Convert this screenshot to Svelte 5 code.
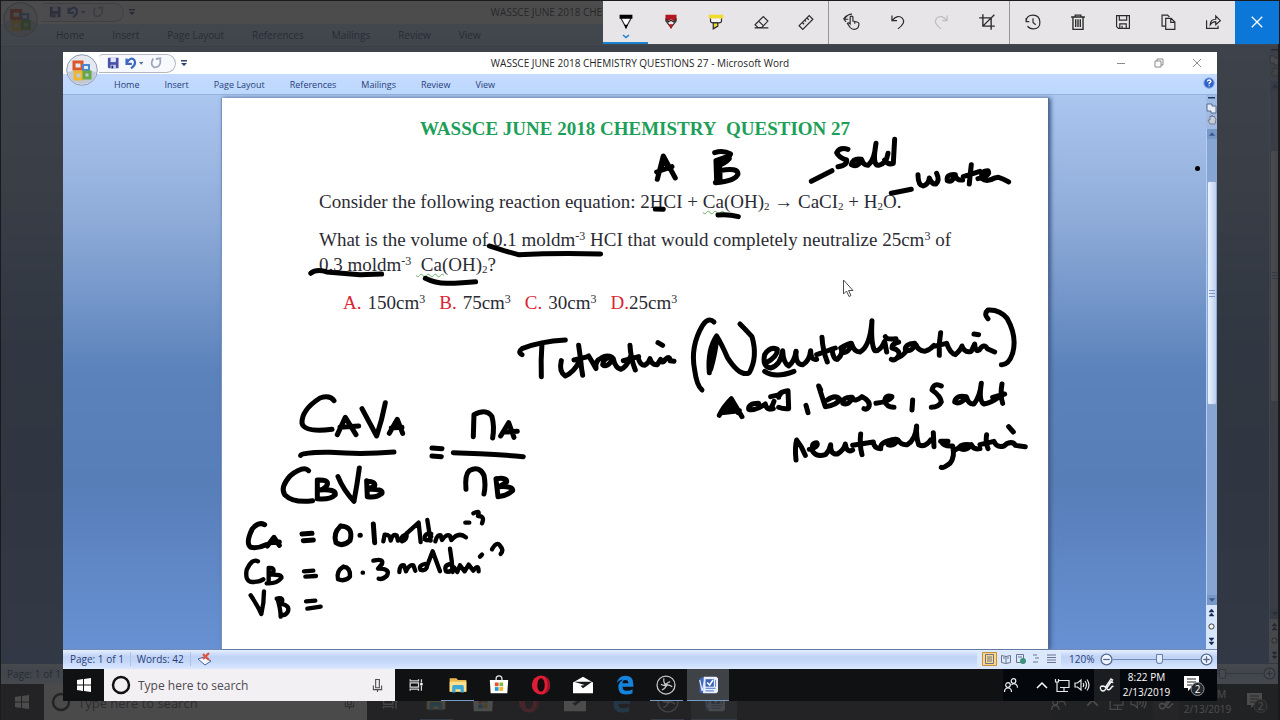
<script>
  const tabs = ['Home', 'Insert', 'Page Layout', 'References', 'Mailings', 'Review', 'View'];
  const apps = [
    { id: 'taskview', label: 'Task View' },
    { id: 'explorer', label: 'File Explorer', open: true },
    { id: 'store', label: 'Store' },
    { id: 'opera', label: 'Opera' },
    { id: 'mail', label: 'Mail' },
    { id: 'edge', label: 'Edge' },
    { id: 'obs', label: 'OBS Studio', open: true },
    { id: 'word', label: 'Word', open: true, active: true }
  ];
  const toolGroups = [
    ['pen', 'pencil', 'highlighter', 'eraser', 'ruler'],
    ['touch', 'undo', 'redo', 'crop'],
    ['history', 'trash', 'save', 'copy', 'share']
  ];

  // Pen strokes, grouped by where they were written; three units to a pixel.
  const ink = [
    { x: 300, y: 110, d: [
      'M1072 208L1090 138L1126 204M1070 186L1116 170M1080 182L1092 150L1108 176',
      'M1066 297L1090 298',
      'M568 408L612 422L655 434Q780 428 902 432',
      'M32 490Q50 476 80 486L180 494L245 492',
      'M376 505Q405 520 440 520Q490 519 527 515'
    ] },
    { x: 640, y: 110, d: [
      'M224 128Q250 120 272 132Q268 148 232 158M228 154L230 212M232 168Q256 160 268 146M240 182Q294 172 294 192Q285 214 226 218M240 176L240 212M228 152L262 140',
      'M234 315Q265 312 295 320',
      'M514 214L576 182',
      'M624 118Q600 110 590 128Q596 142 620 150Q622 166 594 170',
      'M664 148Q640 144 634 164Q650 174 666 150Q670 166 684 166Q704 150 708 100Q696 168 716 166Q740 160 744 130M764 88L760 160Q745 166 734 150',
      'M754 250L814 238',
      'M834 194Q834 226 850 228Q866 222 868 204Q876 224 888 222Q900 210 890 190',
      'M946 194Q918 192 922 212Q936 220 946 196Q950 212 968 210M994 164Q990 200 988 222M970 200L1020 184',
      'M1014 206Q1054 196 1044 182Q1020 182 1026 206Q1040 218 1064 204L1076 202Q1090 206 1106 216'
    ] },
    { x: 500, y: 300, d: [
      'M66 164Q52 156 66 146Q120 124 196 120M126 130Q122 180 124 230',
      'M184 182Q176 216 196 228Q222 216 238 184M236 136L242 180Q244 205 248 226M222 180L264 170',
      'M266 168Q276 184 288 206Q284 182 304 174Q320 164 336 172Q310 172 308 194Q320 206 340 176Q346 204 362 208Q382 200 390 172M390 136Q392 175 406 210M370 182L416 170',
      'M414 172Q420 196 434 196Q446 190 450 176Q456 196 472 194L482 178Q486 194 496 178Q510 166 510 182L522 184M474 128L488 136',
      'M642 66Q626 50 608 76Q570 140 584 210Q590 256 606 270',
      'M628 218Q622 150 650 108Q664 130 682 172Q720 232 748 218Q774 170 756 110Q738 90 720 72M632 208Q646 160 650 116',
      'M658 346Q670 320 694 296L726 350M680 318L718 332L664 338M684 328L700 310L714 338',
      'M776 310Q744 310 746 328Q764 334 796 312Q800 332 820 326M812 290L840 284'
    ] },
    { x: 770, y: 300, d: [
      'M-14 190Q24 170 22 148Q0 138 -16 164Q-24 200 2 204Q32 196 38 152Q40 190 56 198Q72 186 78 156',
      'M-16 214Q16 236 72 214',
      'M78 154Q76 194 98 194Q118 184 122 152Q122 182 140 178M156 112Q158 150 172 186M140 164L196 144',
      'M186 148Q190 180 202 178Q222 160 212 144Q240 128 244 130Q214 136 218 156Q232 162 246 134Q252 156 270 156Q300 140 306 62Q302 130 314 152Q330 156 344 124L350 156',
      'M346 110Q352 120 378 116M386 126Q364 132 366 144Q392 150 386 168Q374 184 364 178',
      'M386 172Q406 162 410 148M434 130Q404 132 406 150Q420 158 438 134Q444 152 464 154Q480 150 492 136M512 98Q506 130 508 166M488 140L530 130Q540 160 556 164Q572 150 576 138Q584 160 604 154L614 132Q616 158 628 150Q642 128 652 146L674 156M612 102L626 104',
      'M654 56Q640 42 654 30Q690 28 712 56Q742 110 728 160Q716 196 694 194',
      'M0 326Q6 322 12 304M54 272Q24 276 26 292M26 322Q40 328 56 326L54 272M108 316L114 338',
      'M146 258Q156 290 166 320Q200 316 210 298Q196 282 172 300M146 258L152 270',
      'M246 292Q218 290 218 310Q234 318 248 294Q254 308 276 290Q304 304 296 322Q290 330 282 326',
      'M318 310Q362 304 366 290Q346 282 344 304Q350 322 372 322M428 300L426 330',
      'M514 258Q492 246 486 270Q512 288 514 306Q506 322 484 322',
      'M588 290Q558 284 554 306Q568 316 590 292Q596 314 612 312Q630 290 634 250Q626 304 642 312Q664 308 688 290M696 252Q690 285 698 310M668 292L704 282',
      'M78 480Q74 440 80 420Q96 440 106 466M118 448Q148 440 140 428Q122 428 128 454Q140 472 166 464Q180 450 182 434Q180 464 202 462Q222 450 226 432Q230 460 248 450',
      'M272 402Q268 435 276 464M248 436L310 426Q312 446 332 446Q328 424 378 418Q350 418 354 434Q370 440 384 420Q394 436 412 434Q436 420 440 378Q438 410 446 434Q466 444 482 420M490 398L492 440',
      'M514 424Q520 440 548 438Q556 470 540 490Q520 506 514 502M512 424L534 424',
      'M550 452Q566 446 572 438M600 434Q570 430 572 446Q590 454 604 434Q610 450 630 446M650 404Q646 430 654 446M630 434L672 424Q680 444 702 438L712 430Q730 424 736 436L766 440M716 380L730 396'
    ] },
    { x: 230, y: 380, d: [
      'M312 62Q300 44 270 54Q214 90 216 130Q222 158 306 148',
      'M322 164L346 112L378 164M330 142L386 138',
      'M396 86L440 168Q456 120 466 68',
      'M478 160L502 118L518 160M484 144L516 142',
      'M212 226Q216 216 300 217Q400 224 492 216',
      'M236 272Q220 256 180 288Q150 322 164 344Q190 370 248 362',
      'M262 300L262 354M262 300Q296 298 292 314Q284 328 268 330Q318 326 316 344Q300 360 262 356',
      'M324 290Q340 330 372 364Q382 310 388 264',
      'M410 302L412 350M412 304Q438 304 434 318L414 328Q460 326 456 340Q440 354 412 350',
      'M606 204L636 206M606 228L634 230',
      'M670 218Q760 220 880 230',
      'M730 170L732 104Q770 84 786 110Q794 140 788 174',
      'M812 168L836 128L852 172M820 156L862 154',
      'M708 328Q704 285 718 272Q748 256 762 286Q768 316 762 342',
      'M798 296L804 350M800 296Q832 292 830 306L808 320Q850 318 848 332Q830 348 804 350',
      'M104 434Q84 424 66 448Q46 490 62 502Q84 506 108 494M112 498L132 472L148 496M120 488L148 486',
      'M216 462L246 460M220 482L250 480',
      'M332 438Q308 460 318 488Q338 502 360 482Q372 440 332 438',
      'M390 466L391 466M430 432L434 488'
    ] },
    { x: 230, y: 380, thin: true, d: [
      'M460 484L464 464Q480 462 482 482Q488 460 500 466L504 482M526 464Q508 472 516 484Q532 480 530 460L566 428L572 486',
      'M592 420L602 482M604 462Q582 458 584 478Q596 486 604 470M616 484Q622 462 632 466L636 480Q650 460 660 468L664 480Q686 454 708 472',
      'M706 428L718 428M730 400Q752 388 744 408Q766 408 756 430',
      'M84 544Q66 534 50 570Q44 604 66 606Q90 606 100 598M116 564L116 608M116 564Q134 562 130 576L118 584Q158 582 154 594Q140 612 110 610',
      'M222 574L250 572M226 590L258 588',
      'M340 560Q318 574 324 598Q346 606 360 590Q362 562 340 560M398 578L399 578',
      'M430 542Q462 534 456 552L444 566Q484 566 470 588Q456 600 446 596',
      'M508 576Q510 552 522 556L528 574Q538 552 550 556L556 572M586 552Q564 556 572 570Q590 574 592 556L608 514L630 574',
      'M660 506Q666 540 668 576M664 552Q640 554 648 574Q660 580 672 562L682 576L690 556L704 574L716 554L730 572Q746 550 746 574M750 530L756 524M786 508Q802 480 812 500Q822 510 812 522',
      'M62 646Q80 672 94 702Q102 670 102 634',
      'M144 662Q152 690 152 710M140 656Q164 650 154 672Q180 676 174 694Q166 708 156 704',
      'M228 664L256 662M232 686L272 680'
    ] }
  ];
</script>

{#snippet appIcon(id)}
  <svg class="app-icon" viewBox="0 0 24 24" aria-hidden="true">
    {#if id === 'taskview'}
      <g fill="none" stroke="#d8d8d8" stroke-width="1.5"><path d="M5 5v2h10V5M5 19v-2h10v2M5 9.500h10v5H5zM18.500 5v4M18.500 13v6" /></g><path d="M17 9.500h3v3h-3z" fill="#fff" />
    {:else if id === 'explorer'}
      <path d="M2 4h8l2 2h10v14H2z" fill="#e9b94e" /><path d="M2 8h20v12H2z" fill="#fbe08e" /><path d="M5 21v-7q0-2 2-2h10q2 0 2 2v7h-4v-4H9v4z" fill="#3fa9d5" />
    {:else if id === 'store'}
      <path d="M8.500 6V4.500Q8.500 1 12 1t3.500 3.500V6" fill="none" stroke="#e8e8e8" stroke-width="1.500" /><path d="M1 6h22l-1 16H2z" fill="#fff" /><path d="M7 9h4.500v4.500H7z" fill="#e8502a" /><path d="M12.500 9H17v4.500h-4.500z" fill="#7fba42" /><path d="M7 14.500h4.500V19H7z" fill="#2299dc" /><path d="M12.500 14.500H17V19h-4.500z" fill="#f4b51e" />
    {:else if id === 'opera'}
      <ellipse cx="12" cy="12" rx="11" ry="11.500" fill="#df1e36" /><path d="M15 1q8 2 8 11t-8 11q5-4 5-11T15 1" fill="#98142a" /><ellipse cx="12" cy="12" rx="4.500" ry="8" fill="#130b0d" />
    {:else if id === 'mail'}
      <path d="M0 9l12-7 12 7v13H0z" fill="#fff" /><path d="M1 8h22l-11 8-3-3 5-1z" fill="#16181b" />
    {:else if id === 'edge'}
      <path d="M2 10Q4 1 12.500 1 22 1 22 11v3H9q0 5 6 5 3 0 6-2v5q-3 1.500-8 1.500-9 0-9-9 0-6 6-9-6 1-8 4.500zM9 10h7q0-4-3.500-4T9 10" fill="#1584dd" fill-rule="evenodd" />
    {:else if id === 'obs'}
      <g fill="none" stroke="#c9c9c9" stroke-width="1.500"><circle cx="12" cy="12" r="10.800" /><path d="M9.500 4q-1 5 2.500 8 3.500-1 7.500 2M12 12q0 4-5 6M12 12q1-3 5-4M12 12q-3 1-6-1" /></g><circle cx="12" cy="12" r="2" fill="#c9c9c9" />
    {:else}
      <path d="M2 4l5-2v20l-5-1z" fill="#3f69bd" /><path d="M7 2h15l2 2v16l-2 2H6z" fill="#e9effc" /><path d="M9 5h10v9H9z" fill="#3a63b6" /><path d="M11 9l3 3 4-6" stroke="#fff" stroke-width="1.800" fill="none" /><path d="M9 16h12M9 19h10M21 6v8" stroke="#6b8fd2" stroke-width="1.300" /><path d="M2 6l3 13 3-12" stroke="#dfe9ff" stroke-width="1.500" fill="none" />
    {/if}
  </svg>
{/snippet}

{#snippet toolIcon(id)}
  <svg class="tool-icon" viewBox="0 0 24 24" aria-hidden="true" fill="none" stroke="#2b2b2b" stroke-width="1.300">
    {#if id === 'pen'}
      <path d="M6.500 8l5.500 10 5.500-10" fill="#fff" /><path d="M5 4h14v4.500H5zM10 15h4l-2 5z" fill="#000" stroke="none" />
    {:else if id === 'pencil'}
      <path d="M6.500 8v3l5.500 7 5.500-7V8" fill="#f6e7e7" /><path d="M6 4h12v5l-3 2-3-2-3 2-3-2zM9.500 14.500h5L12 20z" fill="#b3171f" stroke="none" /><path d="M6.500 9l2.500 3 3-2 3 2 2.500-3" />
    {:else if id === 'highlighter'}
      <path d="M6 8v3q0 2 3 2h6q3 0 3-2V8" fill="#f4f2ee" /><path d="M9 13v6.500l5-3V13z" fill="#f0dc2c" /><path d="M4 4h16v4H4z" fill="#f0dc2c" stroke="none" />
    {:else if id === 'eraser'}
      <path d="M5.500 15L14.500 6l5 5-6.500 7H8.500zM9.500 11l5 5M5 18.500h15" />
    {:else if id === 'ruler'}
      <path d="M4.500 16L15.500 5l4 4-11 11zM8 12.500l2 2M10.500 10l1.500 1.500M13 7.500l2 2" />
    {:else if id === 'touch'}
      <path d="M10 14V6.500q1.500-2 3 0V11l4.500 1q2.500.5 2 3-.5 5-5 5-3 0-4.500-2l-3-4.500q1-1.500 3 .5zM15 11v3M8 9H4M6 5l-3 3.500L5.500 12M4 8.500q3-5 8-5" />
    {:else if id === 'undo'}
      <path d="M6.500 5v5.500H12M6.500 10.500Q13 3 18 8q4 5-5 11.500" />
    {:else if id === 'redo'}
      <path d="M17.500 5v5.500H12M17.500 10.500Q11 3 6 8q-4 5 5 11.500" stroke="#bdbbbe" />
    {:else if id === 'crop'}
      <path d="M7.500 3.500v13h13M3.500 7.500h13v13M7.500 16.500L20 4" stroke-width="1.500" />
    {:else if id === 'history'}
      <path d="M4.500 7.500v4H8M4.500 11Q5 4.500 12 4.500t7.500 7.500-7.500 7.500q-4 0-6-3M12 8v4.500l3 2.500" />
    {:else if id === 'trash'}
      <path d="M4.500 6.500h15M9 6V4.500h6V6M6.500 7v13h11V7M9.500 9v8.500M12 9v8.500M14.500 9v8.500" stroke-width="1.500" />
    {:else if id === 'save'}
      <path d="M5 5h14v14H7l-2-2zM8 5v5h8V5M8.500 19v-5h7v5M11 19v-3" />
    {:else if id === 'copy'}
      <path d="M9 16.500H5.500v-12h6l2 2M9.500 8h6l4 4v8h-10zM15 8v4.500h4.500" />
    {:else if id === 'share'}
      <path d="M5 10v9h12.500v-3M9 15q0-6 6-6V5.500l5 5-5 4.500v-3.500q-4 0-6 3.500z" />
    {:else}
      <path d="M5 5l14 14M19 5L5 19" stroke="#fff" stroke-width="1.800" />
    {/if}
  </svg>
{/snippet}

{#snippet desktop(front)}
  <div class="desktop" class:front inert={!front}>
    <header class="titlebar">
      <div class="quick">
        <svg class="quick-icons" viewBox="0 0 72 18" aria-hidden="true">
          <path d="M1 3h12v12H2l-1-1z" fill="#4c50a8" /><path d="M4 3h6v5H4z" fill="#dfe6fa" /><path d="M4 11h6v4H4z" fill="#c4c9ee" /><path d="M5 12h2v3H5z" fill="#262a70" />
          <path d="M22 4v6h6M22 9q5-8 9-3 2 5-4 9" fill="none" stroke="#3c69c0" stroke-width="2.500" /><path d="M36 8h5l-2.500 3z" fill="#5671a0" />
          <path d="M52 4q-4 7 1 10 8 0 7-9M61 3.500l-6 1" fill="none" stroke="#9ca5ba" stroke-width="2" />
        </svg>
      </div>
      <svg class="more" viewBox="0 0 8 10" aria-hidden="true"><path d="M1 2h6v1.500H1zM1 5h6L4 8z" fill="#33446c" /></svg>
      <h1>WASSCE JUNE 2018 CHEMISTRY QUESTIONS 27 - Microsoft Word</h1>
      {#if front}
        <div class="window-buttons">
          <button aria-label="Minimize"><svg viewBox="0 0 10 10"><path d="M1 5.500h8" /></svg></button>
          <button aria-label="Restore"><svg viewBox="0 0 10 10"><path d="M1 3h6v6H1zM3 3V1h6v6H7" /></svg></button>
          <button aria-label="Close"><svg viewBox="0 0 10 10"><path d="M1 1l8 8M9 1L1 9" /></svg></button>
        </div>
      {/if}
    </header>
    <button class="orb" aria-label="Office">
      <svg viewBox="0 0 32 32" aria-hidden="true">
        <circle cx="16" cy="16" r="15.300" fill="#e4e9f1" stroke="#8c9bb4" stroke-width="1" /><path d="M2 18q14-5 28 0-2 12-14 12T2 18" fill="#bfc9da" />
        <g fill="none" stroke-width="3"><path d="M8 8h8v7H8z" stroke="#dc562a" /><path d="M9 18h7v7H9z" stroke="#eeb72e" /><path d="M17 11h6v5h-6z" stroke="#4a86d0" stroke-width="2" /><path d="M18 18h6v6h-6z" stroke="#65a845" /></g>
      </svg>
    </button>
    <nav class="tabs">
      {#each tabs as tab}<button>{tab}</button>{/each}
      <svg class="help" viewBox="0 0 12 12" aria-hidden="true"><circle cx="6" cy="6" r="5.200" fill="#2f62cc" stroke="#86a9e4" /><path d="M4.300 4.500q.2-1.500 1.900-1.500t1.700 1.500Q7.700 5.500 6.200 6v1.200M6.200 8.200v1" stroke="#fff" stroke-width="1.300" fill="none" /></svg>
    </nav>
    <main class="work">
      {#if front}
        <article class="page">
          <h2>WASSCE JUNE 2018 CHEMISTRY&nbsp; QUESTION 27</h2>
          <p>Consider the following reaction equation: 2HCI + <span class="squiggle">Ca(</span>OH)<sub>2</sub> → CaCI<sub>2</sub> + H<sub>2</sub>O.</p>
          <p>What is the volume of 0.1 moldm<sup>-3</sup> HCI that would completely neutralize 25cm<sup>3</sup> of 0.3 moldm<sup>-3</sup> <span class="squiggle">&nbsp;Ca(</span>OH)<sub>2</sub>?</p>
          <ul>
            <li><b class="spaced">A.</b>150cm<sup>3</sup></li>
            <li><b class="spaced">B.</b>75cm<sup>3</sup></li>
            <li><b class="spaced">C.</b>30cm<sup>3</sup></li>
            <li><b>D.</b>25cm<sup>3</sup></li>
          </ul>
        </article>
      {/if}
      <div class="scroll">
        <svg class="scroll-head" viewBox="0 0 11 34" aria-hidden="true">
          <path d="M2 2h7v1.500H2z" fill="#20386c" /><path d="M1 9h5v2h4v7H5v-2H1z" fill="#e8ecf5" stroke="#566b92" /><path d="M2 25l2 4h5l1-5-1-1-1-2-1 1-1-2-1 2-1-1v4z" fill="#c8ccd6" stroke="#636c80" stroke-width=".8" />
        </svg>
        <div class="track">
          <svg viewBox="0 0 11 10" aria-hidden="true"><path d="M2 7h7L5.500 3z" fill="#39598f" /></svg>
          <div class="thumb"><i></i></div>
          <svg viewBox="0 0 11 10" aria-hidden="true"><path d="M2 3h7L5.500 7z" fill="#39598f" /></svg>
        </div>
        <svg class="scroll-foot" viewBox="0 0 11 44" aria-hidden="true">
          <path d="M3 7h5L5.500 4zM3 11h5L5.500 8zM3 33h5l-2.500 3zM3 37h5l-2.500 3z" fill="#16284e" stroke="#16284e" stroke-width=".5" /><circle cx="5.500" cy="21.500" r="2.600" fill="#f4f3e4" stroke="#353c4c" />
        </svg>
      </div>
    </main>
    <footer class="status">
      <span class="cell">Page: 1 of 1</span>
      <span class="cell">Words: 42</span>
      <svg class="proof" viewBox="0 0 16 14" aria-hidden="true"><path d="M1 7l6-2 7 4-6 4z" fill="#f4f7ff" stroke="#4663a3" /><path d="M6 2l6 6M12 1L6 7" stroke="#dd5342" stroke-width="2.200" /></svg>
      <svg class="views" viewBox="0 0 84 16" aria-hidden="true">
        <path d="M0 0h84v16H0z" fill="#dce8fb" /><path d="M5.500 1.500h14v13h-14z" fill="#ffd68a" stroke="#c98f3c" />
        <g fill="none" stroke="#66748f"><path d="M8.500 3.500h8v9h-8zM10 6h5M10 8h5M10 10h5M24.500 4.500l4.500 1 4.500-1v7l-4.500 1-4.500-1zM29 5v7M26 7h2M30 7h2M39.500 3.500h7v8h-7zM41 6h4M56 4h4M58 7h4M56 11h5M70 4h9M70 6.500h9M70 9h9M70 11.500h9" /></g><circle cx="46" cy="10" r="3" fill="#3c927c" />
      </svg>
      <span class="percent">120%</span>
      <svg class="round" viewBox="0 0 12 12" aria-hidden="true"><circle cx="6" cy="6" r="5" /><path d="M3 6h6" /></svg>
      <input class="zoom" type="range" aria-label="Zoom" min="0" max="100" value="54" />
      <svg class="round" viewBox="0 0 12 12" aria-hidden="true"><circle cx="6" cy="6" r="5" /><path d="M3 6h6M6 3v6" /></svg>
    </footer>
    <div class="taskbar">
      <button class="start" aria-label="Start"><svg viewBox="0 0 16 16"><path d="M1 3l6-1v5.500H1zM8 2l7-1v6.500H8zM1 8.500h6V14l-6-1zM8 8.500h7V15l-7-1z" fill="#fff" /></svg></button>
      <label class="search">
        <svg class="ring" viewBox="0 0 20 20" aria-hidden="true"><circle cx="10" cy="10" r="8" fill="none" stroke="#111" stroke-width="2.500" /></svg>
        <input type="text" aria-label="Search" placeholder="Type here to search" />
        <svg class="mic" viewBox="0 0 12 16" aria-hidden="true"><path d="M4 1.500h4v9H4zM1.500 8v4.500h9V8M6 12.500V15" fill="none" stroke="#4d4b4f" stroke-width="1.200" /></svg>
      </label>
      <div class="apps">
        {#each apps as app}
          <button aria-label={app.label} class:open={app.open} class:active={app.active}>{@render appIcon(app.id)}</button>
        {/each}
      </div>
      <div class="tray">
        <svg class="people" viewBox="0 0 16 16" aria-hidden="true"><g fill="none" stroke="#eee" stroke-width="1.200"><circle cx="10.500" cy="4" r="2.300" /><circle cx="5" cy="8" r="2.300" /><path d="M1.500 15q0-4 3.500-4t3.500 4M8.500 8q1-1.500 3-1.200 3 .5 3 4" /></g></svg>
        <svg viewBox="0 0 16 16" aria-hidden="true"><path d="M3 11l5-5 5 5" fill="none" stroke="#fff" stroke-width="1.500" /></svg>
        <svg viewBox="0 0 16 16" aria-hidden="true"><path d="M5 3.500h10v7H6M10 11v3M6 14.500h8M3 7v7.500h3M1.500 2v3h3V2M3 5v2" fill="none" stroke="#e8e8e8" stroke-width="1.200" /></svg>
        <svg viewBox="0 0 16 16" aria-hidden="true"><path d="M1 6h2.500L7 3v10L3.500 10H1zM9 6q1.500 2 0 4M11 4q3 4 0 8M13 2.500q4 5.500 0 11" fill="none" stroke="#e8e8e8" stroke-width="1.200" /></svg>
        <span class="pen-cell"><svg viewBox="0 0 16 16" aria-hidden="true"><path d="M2 13q-2-4 2-4 5 1 2 4-2 2-4 0M6 11l6-9 1.500 1-6 8.500M9 6q4-2 5 0M8 12q2 2 4-1t2-1" fill="none" stroke="#f1f1f1" stroke-width="1.400" /></svg></span>
        <time><span>8:22 PM</span><span>2/13/2019</span></time>
        <svg class="note" viewBox="0 0 22 22" aria-hidden="true"><path d="M1 2h15v12H8l-3 3v-3H1z" fill="#fff" /><path d="M4 5h9M4 8h9M4 11h5" stroke="#222" stroke-width="1" /><circle cx="14.500" cy="15" r="6.500" fill="#24272c" stroke="#909296" /><text x="14.500" y="18.500" text-anchor="middle" fill="#fff">2</text></svg>
      </div>
    </div>
    {#if front}
      <svg class="ink" viewBox="63 52 1154 649" role="img" aria-label="Handwritten notes">
        {#each ink as group}
          <g class:thin={group.thin} transform="translate({group.x} {group.y}) scale(0.3333)">
            {#each group.d as d}<path {d} />{/each}
          </g>
        {/each}
        <circle cx="1197.500" cy="168.500" r="2.500" fill="#000" />
        <path class="pointer" d="M843.500 280v14l3-3 2.500 5.500 2-1-2.500-5h4.500z" />
      </svg>
    {/if}
  </div>
{/snippet}

<div class="screen">
  <div class="backdrop">{@render desktop(false)}</div>
  <div class="shot">{@render desktop(true)}</div>
  <div class="toolbar" role="toolbar" aria-label="Sketch tools">
    {#each toolGroups as group}
      <div class="tool-group">
        {#each group as tool}
          <button aria-label={tool} class:selected={tool === 'pen'}>
            {@render toolIcon(tool)}
            {#if tool === 'pen'}<svg class="caret" viewBox="0 0 8 5" aria-hidden="true"><path d="M1 1l3 2.500L7 1" /></svg>{/if}
          </button>
        {/each}
      </div>
    {/each}
    <button class="exit" aria-label="Close sketch">{@render toolIcon('exit')}</button>
  </div>
</div>

<style>
  :global(body) { background: #1c1c1d; }
  * { box-sizing: border-box; }
  button { border: 0; padding: 0; background: none; font: inherit; color: inherit; display: grid; place-items: center; }
  svg { display: block; flex: none; }

  .screen { position: relative; min-height: 100vh; display: flex; font-family: "Open Sans", "Noto Sans", sans-serif; overflow: hidden; }
  .backdrop { position: absolute; inset: 0; display: flex; isolation: isolate; }
  .backdrop::after { content: ""; position: absolute; inset: 0; z-index: 5; background: rgba(40, 40, 41, .83); border: solid #1b1b1d; border-width: 1px 2px 0 1px; }
  .shot { position: relative; flex: 1; display: flex; margin: 52px 63px 19px; }

  .desktop {
    --title-h: 24px; --tabs-h: 23px; --status-h: 20px; --task-h: 36px;
    --text: 10px; --search: 13px; --icon: 22px; --orb: 35px; --tab-gap: 28px; --lead: 56px;
    --quick-x: 41px; --quick-w: 83px; --start: 44px; --search-w: 323px; --apps-w: 370px; --tray-gap: 6px; --glyph: 17px;
    position: relative; flex: 1; min-width: 0; display: flex; flex-direction: column; color: #27407a; font-size: var(--text);
  }
  .desktop.front {
    --title-h: 22px; --tabs-h: 21px; --status-h: 19px; --task-h: 32px;
    --text: 9px; --search: 12px; --icon: 20px; --orb: 32px; --tab-gap: 25px; --lead: 51px;
    --quick-x: 36px; --quick-w: 77px; --start: 41px; --search-w: 291px; --apps-w: 334px; --tray-gap: 4px; --glyph: 16px;
  }

  .titlebar { height: var(--title-h); background: #fff; display: grid; grid-template-columns: var(--quick-x) var(--quick-w) 12px 1fr auto; align-items: center; position: relative; }
  .quick { grid-column: 2; height: 19px; border: 1px solid #b3b8c3; border-left: 0; border-radius: 4px 10px 10px 0; background: #f8f9fd; display: flex; align-items: center; padding-left: 8px; }
  .quick-icons { width: 64px; height: 16px; }
  .more { width: 8px; height: 10px; justify-self: end; }
  h1 { position: absolute; inset: 0; margin: 0; display: grid; place-items: center; font-weight: 400; font-size: var(--text); color: #252525; white-space: nowrap; }
  .front h1 { font-size: 10px; }
  .window-buttons { grid-column: 5; display: flex; gap: 28px; margin-right: 15px; position: relative; }
  .window-buttons svg { width: 10px; height: 10px; fill: none; stroke: #8b8b8b; }
  .orb { position: absolute; left: 3px; top: 2px; width: var(--orb); height: var(--orb); z-index: 2; }
  .orb svg { width: 100%; height: 100%; }

  .tabs { height: var(--tabs-h); background: linear-gradient(#c5dbff, #bdd7fd); border-bottom: 1px solid #95b3dd; display: flex; align-items: center; gap: var(--tab-gap); padding: 0 2px 0 var(--lead); white-space: nowrap; }
  .help { width: 12px; height: 12px; margin-left: auto; align-self: start; margin-top: 3px; }

  .work { flex: 1; display: flex; justify-content: flex-end; background: linear-gradient(#abc6ef, #8facd9 22%, #5b82bb 50%, #587eb8 70%, #6791d3); border-bottom: 1px solid #748cb7; }
  .page { flex: 1; margin: 3px 157px 0 158px; padding: 18px 97px 0; background: #fff; border-right: 1px solid #4e6b99; border-left: 1px solid #7793be; box-shadow: 2px 0 4px #435e8b; color: #2b2b33; font: 19px/25px "Liberation Serif", serif; }
  .page h2 { margin: 0 0 48px; text-align: center; color: #1d9f59; font-size: 19px; line-height: 25px; }
  .page p { margin: 0 0 13px; text-align: justify; }
  .page sub, .page sup { font-size: 12px; line-height: 12px; vertical-align: 6px; }
  .page sub { vertical-align: -2px; font-size: 11px; }
  .page ul { margin: 0; padding: 0 0 0 24px; list-style: none; display: flex; gap: 14px; white-space: nowrap; }
  .page b { font-weight: 400; color: #dc2532; }
  .page .spaced { margin-right: 6px; }
  .squiggle { text-decoration: underline wavy #6caf69 1px; text-underline-offset: 2px; }
  .scroll { width: 11px; display: flex; flex-direction: column; background: #a2bbe4; }
  .scroll-head { width: 11px; height: 34px; }
  .scroll-foot { width: 11px; height: 44px; background: #d8e6fb; }
  .track { flex: 1; display: flex; flex-direction: column; justify-content: space-between; background: #87a5d2; border-left: 1px solid #b5cdf3; }
  .track svg { height: 10px; width: 10px; background: #7797c6; }
  .thumb { flex: 0 0 47%; margin-bottom: 148px; display: grid; place-items: center; background: linear-gradient(90deg, #edf4ff, #bdd1f0); border: 1px solid #8da9d6; border-radius: 2px; }
  .thumb i { width: 6px; height: 7px; background: repeating-linear-gradient(#7996c7 0 1px, transparent 1px 3px); }

  .status { height: var(--status-h); background: linear-gradient(#e4eeff, #c0d3f5 35%, #c4d7f8 60%, #dbe8ff); display: flex; align-items: center; padding: 0 4px 1px 7px; white-space: nowrap; }
  .front .status { font-size: 10px; }
  .status .cell { padding-right: 6px; margin-right: 6px; border-right: 1px solid #b0c3e5; }
  .proof { width: 16px; height: 14px; }
  .views { width: 84px; height: 16px; margin-left: auto; margin-right: 8px; }
  .percent { width: 31px; }
  .round { width: 13px; height: 13px; fill: #f2f6ff; stroke: #556a90; stroke-width: 1.2; }
  .zoom { appearance: none; width: 87px; height: 13px; margin: 0; background: linear-gradient(#7089b6, #7089b6) center / 100% 1px no-repeat; }
  .zoom::-webkit-slider-thumb { appearance: none; width: 7px; height: 10px; background: #e2ebfc; border: 1px solid #647da9; border-radius: 1px 1px 4px 4px; }

  .taskbar { height: var(--task-h); background: #101113; display: flex; align-items: stretch; color: #fff; }
  .start { width: var(--start); }
  .start svg { width: 16px; height: 16px; }
  .search { width: var(--search-w); background: #f3f0f4; display: flex; align-items: center; padding: 0 12px 0 7px; gap: 7px; }
  .search input { flex: 1; min-width: 0; border: 0; padding: 1px 0 0; outline: 0; background: none; font: inherit; font-size: var(--search); }
  .search input::placeholder { color: #4c4a4e; opacity: 1; }
  .ring { width: 20px; height: 20px; }
  .mic { width: 11px; height: 15px; }
  .apps { width: var(--apps-w); display: grid; grid-template-columns: repeat(8, 1fr); }
  .app-icon { width: var(--icon); height: var(--icon); }
  .apps .open { background: linear-gradient(#779bc7, #779bc7) bottom / 33px 1px no-repeat; }
  .apps .active { background: linear-gradient(#779bc7, #779bc7) bottom / 100% 1px no-repeat #3f4247; }
  .tray { margin-left: auto; display: flex; align-items: center; gap: var(--tray-gap); padding-right: 12px; background: #04070c; }
  .tray svg { width: var(--glyph); height: var(--glyph); }
  .tray .people { margin-right: 11px; }
  .pen-cell { align-self: stretch; width: 26px; display: grid; place-items: center; background: #1b1d21; }
  time { width: 45px; display: flex; flex-direction: column; align-items: center; font-size: 10px; line-height: 15px; white-space: nowrap; }
  .tray .note { width: 22px; height: 22px; margin-left: 10px; }
  .note text { font-size: 10px; }

  .ink { position: absolute; inset: 0; width: 100%; height: 100%; z-index: 3; pointer-events: none; }
  .ink g { fill: none; stroke: #000; stroke-width: 15; stroke-linecap: round; stroke-linejoin: round; }
  .ink g.thin { stroke-width: 13; }
  .pointer { fill: #fff; stroke: #4d4d55; }

  .toolbar { position: absolute; right: 1px; top: 1px; height: 43px; display: flex; background: #e8e5e9; z-index: 4; }
  .tool-group { display: flex; border-right: 1px solid #98979b; }
  .tool-group:nth-of-type(3) { border-right: 0; }
  .toolbar button { position: relative; width: 45px; height: 43px; padding-bottom: 2px; }
  .toolbar .selected { border-bottom: 2px solid #1c82cf; padding-bottom: 0; }
  .tool-icon { width: 22px; height: 22px; }
  .caret { position: absolute; left: 19px; top: 33px; width: 8px; height: 5px; fill: none; stroke: #1c82cf; stroke-width: 1.500; }
  .toolbar .exit { width: 44px; background: #0b77d8; }
  .exit .tool-icon { width: 18px; height: 18px; }
</style>
